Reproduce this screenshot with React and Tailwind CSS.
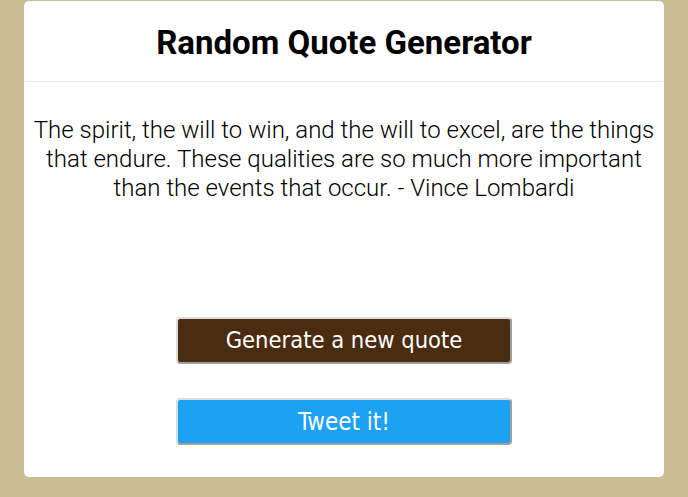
export default function App() {
  return (
    <div className="min-h-[497px] bg-[#c9bd96] px-[24px] pt-[1px]">
      <div className="h-[476px] rounded-[5px] bg-white flex flex-col font-['Roboto',sans-serif] text-black">
        <div className="h-[81px] border-b border-[#e8e8e8] flex items-center justify-center">
          <h1 className="text-[33px] font-bold leading-none pt-[2px]">Random Quote Generator</h1>
        </div>
        <p className="mt-[34px] px-[6px] text-center text-[24px] font-light leading-[29px]">
          The spirit, the will to win, and the will to excel, are the things that endure. These qualities are so much more important than the events that occur. - Vince Lombardi
        </p>
        <div className="mt-auto mb-[32px] flex flex-col items-center gap-[34px]">
          <button className="w-[336px] h-[47px] rounded-[4px] border-2 border-t-[#dcdcdc] border-l-[#dcdcdc] border-r-[#a0a0a0] border-b-[#a0a0a0] bg-[#4a2c11] text-white text-[23.5px] font-['DejaVu_Sans_Condensed','DejaVu_Sans',sans-serif]">
            Generate a new quote
          </button>
          <button className="w-[336px] h-[47px] rounded-[4px] border-2 border-t-[#dcdcdc] border-l-[#dcdcdc] border-r-[#a0a0a0] border-b-[#a0a0a0] bg-[#1da1f2] text-white text-[24px] font-['DejaVu_Sans_Condensed','DejaVu_Sans',sans-serif]">
            Tweet it!
          </button>
        </div>
      </div>
    </div>
  );
}
